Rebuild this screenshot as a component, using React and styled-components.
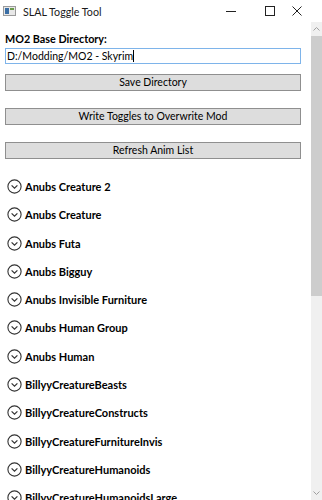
import React from "react";
import styled, { createGlobalStyle } from "styled-components";

const GlobalStyle = createGlobalStyle`
  html, body {
    margin: 0;
    padding: 0;
    background: #ffffff;
    overflow: hidden;
  }
  * {
    box-sizing: border-box;
  }
`;

const anims = [
  "Anubs Creature 2",
  "Anubs Creature",
  "Anubs Futa",
  "Anubs Bigguy",
  "Anubs Invisible Furniture",
  "Anubs Human Group",
  "Anubs Human",
  "BillyyCreatureBeasts",
  "BillyyCreatureConstructs",
  "BillyyCreatureFurnitureInvis",
  "BillyyCreatureHumanoids",
  "BillyyCreatureHumanoidsLarge",
];

function Expander() {
  return (
    <svg width="15" height="15" viewBox="0 0 15 15">
      <circle cx="7.5" cy="7.5" r="6.6" fill="#fff" stroke="#333" strokeWidth="1.1" />
      <path d="M4.6 6.3 L7.5 9.2 L10.4 6.3" fill="none" stroke="#333" strokeWidth="1.2" />
    </svg>
  );
}

export default function App() {
  return (
    <Window>
      <GlobalStyle />
      <TitleBar>
        <AppIcon>
          <svg width="13" height="10" viewBox="0 0 13 10">
            <rect x="0.5" y="0.5" width="12" height="9" fill="#e8e8e8" stroke="#9a9a9a" />
            <rect x="2" y="2" width="4" height="6" fill="#3a6ea5" />
            <rect x="7" y="2" width="4" height="2" fill="#6a9a4a" />
          </svg>
        </AppIcon>
        <Title>SLAL Toggle Tool</Title>
        <Controls>
          <Ctrl>
            <svg width="10" height="10" viewBox="0 0 10 10">
              <path d="M0 5.5 H10" stroke="#222" strokeWidth="1" />
            </svg>
          </Ctrl>
          <Ctrl>
            <svg width="10" height="10" viewBox="0 0 10 10">
              <rect x="0.5" y="0.5" width="9" height="9" fill="none" stroke="#222" strokeWidth="1" />
            </svg>
          </Ctrl>
          <Ctrl>
            <svg width="10" height="10" viewBox="0 0 10 10">
              <path d="M0.5 0.5 L9.5 9.5 M9.5 0.5 L0.5 9.5" stroke="#222" strokeWidth="1" />
            </svg>
          </Ctrl>
        </Controls>
      </TitleBar>
      <Body>
        <Content>
          <Label>MO2 Base Directory:</Label>
          <PathInput>
            D:/Modding/MO2 - Skyrim<Caret />
          </PathInput>
          <Button $gap={10}>Save Directory</Button>
          <Button $gap={17}>Write Toggles to Overwrite Mod</Button>
          <Button $gap={17}>Refresh Anim List</Button>
          <List>
            {anims.map((name) => (
              <Row key={name}>
                <Expander />
                <RowText>{name}</RowText>
              </Row>
            ))}
          </List>
        </Content>
        <ScrollBar>
          <Arrow>
            <svg width="7" height="4" viewBox="0 0 7 4">
              <path d="M0.5 3.5 L3.5 0.5 L6.5 3.5" fill="none" stroke="#a0a0a0" />
            </svg>
          </Arrow>
          <Thumb />
          <Track />
          <Arrow>
            <svg width="7" height="4" viewBox="0 0 7 4">
              <path d="M0.5 0.5 L3.5 3.5 L6.5 0.5" fill="none" stroke="#a0a0a0" />
            </svg>
          </Arrow>
        </ScrollBar>
      </Body>
    </Window>
  );
}

const Window = styled.div`
  width: 322px;
  height: 500px;
  display: flex;
  flex-direction: column;
  font-family: Lato, "Noto Sans", sans-serif;
  color: #000;
  overflow: hidden;
`;

const TitleBar = styled.div`
  height: 22px;
  flex-shrink: 0;
  display: flex;
  align-items: center;
  background: #ffffff;
  padding-left: 3px;
`;

const AppIcon = styled.div`
  display: flex;
  width: 14px;
`;

const Title = styled.div`
  margin-left: 6px;
  font-size: 10.7px;
  color: #1a1a1a;
`;

const Controls = styled.div`
  margin-left: auto;
  display: flex;
  height: 100%;
`;

const Ctrl = styled.div`
  width: 39px;
  height: 100%;
  display: flex;
  align-items: center;
  justify-content: center;
  &:last-child {
    width: 33px;
    justify-content: flex-start;
    padding-left: 3px;
  }
`;

const Body = styled.div`
  flex: 1;
  display: flex;
  min-height: 0;
`;

const Content = styled.div`
  flex: 1;
  display: flex;
  flex-direction: column;
  padding: 9px 10px 0 5px;
  overflow: hidden;
  & > * {
    flex-shrink: 0;
  }
`;

const Label = styled.div`
  font-size: 10.8px;
  font-weight: 700;
  line-height: 15px;
`;

const PathInput = styled.div`
  margin-top: 2px;
  height: 16px;
  border: 1px solid #7eb4ea;
  font-size: 10.5px;
  line-height: 14px;
  padding-left: 1px;
  display: flex;
  align-items: center;
  white-space: nowrap;
`;

const Caret = styled.span`
  display: inline-block;
  width: 1px;
  height: 12px;
  background: #000;
`;

const Button = styled.div`
  margin-top: ${(p) => p.$gap}px;
  height: 17px;
  background: #dddddd;
  border: 1px solid #8f8f8f;
  font-size: 10.5px;
  display: flex;
  align-items: center;
  justify-content: center;
  line-height: 1;
`;

const List = styled.div`
  margin-top: 20px;
  display: flex;
  flex-direction: column;
  gap: 13.3px;
  padding-left: 2px;
`;

const Row = styled.div`
  display: flex;
  align-items: center;
  gap: 3px;
  height: 15px;
  flex-shrink: 0;
`;

const RowText = styled.div`
  font-size: 11px;
  font-weight: 700;
  white-space: nowrap;
`;

const ScrollBar = styled.div`
  width: 11px;
  flex-shrink: 0;
  background: #f0f0f0;
  display: flex;
  flex-direction: column;
`;

const Arrow = styled.div`
  height: 14px;
  flex-shrink: 0;
  display: flex;
  align-items: center;
  justify-content: center;
`;

const Thumb = styled.div`
  height: 260px;
  flex-shrink: 0;
  background: #cdcdcd;
`;

const Track = styled.div`
  flex: 1;
`;
